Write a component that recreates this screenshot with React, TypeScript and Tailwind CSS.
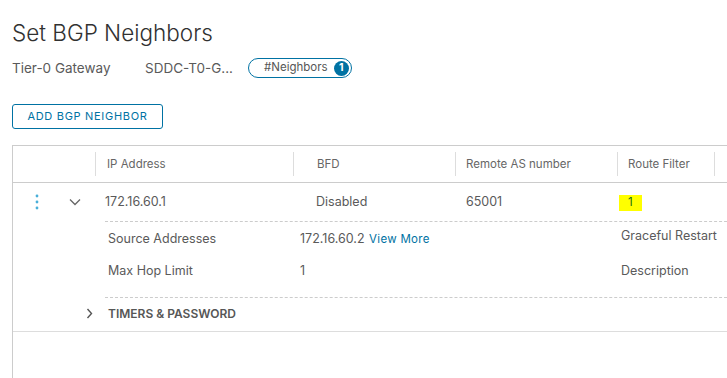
import React from 'react';

const font = { fontFamily: 'Inter, Lato, "Noto Sans", sans-serif' };

const Dots = () => (
  <svg width="4" height="16" viewBox="0 0 4 16" className="text-[#49afd9]">
    <circle cx="2" cy="2" r="1.4" fill="currentColor" />
    <circle cx="2" cy="8" r="1.4" fill="currentColor" />
    <circle cx="2" cy="14" r="1.4" fill="currentColor" />
  </svg>
);

const ChevronDown = () => (
  <svg width="12" height="8" viewBox="0 0 12 8" fill="none">
    <path d="M1 1.5 L6 6.5 L11 1.5" stroke="#666" strokeWidth="1.3" />
  </svg>
);

const ChevronRight = () => (
  <svg width="7" height="11" viewBox="0 0 7 11" fill="none">
    <path d="M1.5 1 L5.5 5.5 L1.5 10" stroke="#555" strokeWidth="1.4" />
  </svg>
);

export default function App() {
  return (
    <div className="w-[727px] h-[378px] overflow-hidden bg-white text-[#5a5a5a]" style={font}>
      <div className="pl-3 pt-[19px]">
        <h1 className="text-[22.5px] leading-[28px] text-[#313131] font-light">Set BGP Neighbors</h1>

        <div className="flex items-center mt-[11px] h-[20px] text-[13.5px]">
          <span className="w-[133px]">Tier-0 Gateway</span>
          <span className="w-[103px]">SDDC-T0-G...</span>
          <span className="flex items-center h-[20px] border border-[#0072a3] rounded-full pl-[15px] pr-[2px] text-[11.5px] text-[#565656]">
            #Neighbors
            <span className="ml-[6px] w-[15px] h-[15px] rounded-full bg-[#0072a3] text-white text-[10.5px] font-bold flex items-center justify-center">1</span>
          </span>
        </div>

        <button className="mt-[26px] h-[25px] w-[151px] border border-[#0072a3] rounded-[3px] text-[11px] tracking-[0.7px] text-[#0072a3] flex items-center justify-center">
          ADD BGP NEIGHBOR
        </button>

        <div className="mt-[16px] w-[760px] border-l border-t border-[#ccc] h-[240px]">
          {/* header */}
          <div className="flex h-[37px] items-center border-b border-[#ccc] text-[11.5px] text-[#666]">
            <div className="w-[83px] h-[24px] border-r border-[#ddd]" />
            <div className="w-[198px] h-[24px] border-r border-[#ddd] pl-[11px] flex items-center pt-[2px]">IP Address</div>
            <div className="w-[162px] h-[24px] border-r border-[#ddd] pl-[23px] flex items-center pt-[2px]">BFD</div>
            <div className="w-[162px] h-[24px] border-r border-[#ddd] pl-[10px] flex items-center pt-[2px]">Remote AS number</div>
            <div className="w-[97px] h-[24px] border-r border-[#ddd] pl-[10px] flex items-center pt-[2px]">Route Filter</div>
          </div>

          {/* row */}
          <div className="border-b border-[#ddd] text-[12.5px]">
            <div className="flex items-center h-[38px]">
              <div className="w-[83px] flex items-center">
                <span className="ml-[22px] flex"><Dots /></span>
                <span className="ml-[30px] flex"><ChevronDown /></span>
              </div>
              <div className="w-[198px] pl-[9px]">172.16.60.1</div>
              <div className="w-[162px] pl-[22px]">Disabled</div>
              <div className="w-[162px] pl-[10px]">65001</div>
              <div className="w-[97px] pl-[1px]">
                <span className="inline-block w-[23px] h-[16px] bg-[#ffff00] text-[11.5px] leading-[14px] pl-[9px] text-[#1a6d1a]">1</span>
              </div>
            </div>

            <div className="ml-[92px] border-t border-dashed border-[#ccc]">
              <div className="flex h-[32px] pt-[8px]">
                <div className="w-[195px] pl-[3px]">Source Addresses</div>
                <div className="w-[321px]">
                  172.16.60.2 <span className="text-[#0072a3] text-[11.5px] tracking-[0.3px] ml-[1px]">View More</span>
                </div>
                <div className="-mt-[3px]">Graceful Restart</div>
              </div>
              <div className="flex h-[44px] pt-[8px]">
                <div className="w-[195px] pl-[3px]">Max Hop Limit</div>
                <div className="w-[321px]">1</div>
                <div>Description</div>
              </div>
            </div>

            <div className="flex items-center h-[34px] pb-[2px] border-t border-dashed border-[#ccc] ml-[92px] -mt-[1px] relative">
              <span className="absolute -left-[19px] top-[10px] flex"><ChevronRight /></span>
              <span className="pl-[3px] text-[12px] font-semibold text-[#565656]">TIMERS &amp; PASSWORD</span>
            </div>
          </div>
        </div>
      </div>
    </div>
  );
}
